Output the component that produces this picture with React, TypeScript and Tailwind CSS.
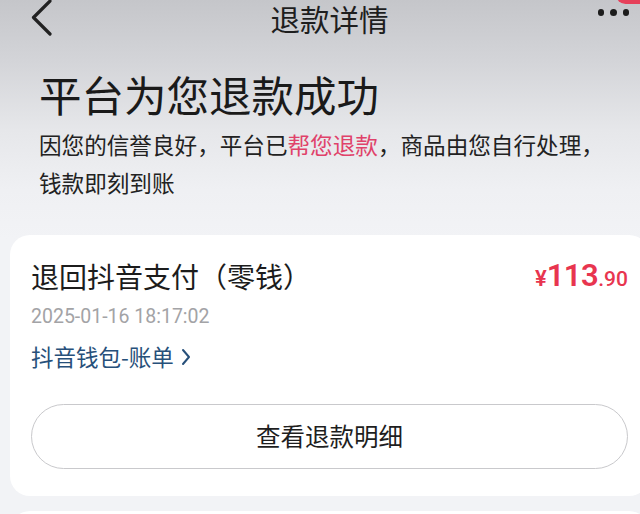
function NavBar() {
  return (
    <div className="relative grid h-[34px] grid-cols-[1fr_auto_1fr] items-center" data-name="Nav Bar">
      <div className="flex items-center pl-[30px]">
        <svg width="24" height="36" viewBox="0 0 24 36" fill="none" className="block">
          <path d="M20 1L3.5 17.5L20 34" stroke="#222222" strokeWidth="3.2" strokeLinecap="round" strokeLinejoin="round" />
        </svg>
      </div>
      <p className="font-['Noto_Sans_CJK_SC',sans-serif] text-[29.5px] leading-[34px] text-[#1e1e1e]">退款详情</p>
      <div className="flex h-full items-start justify-end pr-[30px] pt-[9px]">
        <div className="flex gap-[6px]">
          <span className="size-[6.5px] rounded-full bg-[#1c1c1c]" />
          <span className="size-[6.5px] rounded-full bg-[#1c1c1c]" />
          <span className="size-[6.5px] rounded-full bg-[#1c1c1c]" />
        </div>
      </div>
      <span className="absolute left-[616px] top-[-15px] h-[19px] w-[34px] rounded-full bg-[#e6405a]" />
    </div>
  );
}

function Summary() {
  return (
    <div className="px-[39px]" data-name="Summary">
      <h1 className="mt-[35px] font-['Noto_Sans_CJK_SC',sans-serif] text-[42.5px] leading-[49px] text-[#1a1a1a]">平台为您退款成功</h1>
      <p className="mt-[8px] font-['Noto_Sans_CJK_SC',sans-serif] text-[22.6px] leading-[38px] text-[#222222]">
        因您的信誉良好，平台已<span className="text-[#e0426a]">帮您退款</span>，商品由您自行处理，
        <br />
        钱款即刻到账
      </p>
    </div>
  );
}

function RefundCard() {
  return (
    <div className="ml-[10px] w-[639px] rounded-[20px] bg-white px-[21px] pb-[27px] pt-[22px]" data-name="Refund Card">
      <div className="flex h-[38px] items-center justify-between">
        <p className="font-['Noto_Sans_CJK_SC',sans-serif] text-[28px] leading-[38px] text-[#1c1c1c]">退回抖音支付（零钱）</p>
        <p className="flex items-baseline font-['Roboto',sans-serif] text-[#e8354f]">
          <span className="text-[22px] font-semibold">¥</span>
          <span className="text-[31px] font-semibold tracking-[-0.5px]">113</span>
          <span className="text-[21px] font-medium">.90</span>
        </p>
      </div>
      <p className="mt-[8px] font-['Roboto',sans-serif] text-[19.5px] leading-[28px] text-[#a3a3a6]">2025-01-16 18:17:02</p>
      <div className="mt-[10px] flex h-[30px] items-center gap-[7px]">
        <p className="font-['Noto_Sans_CJK_SC',sans-serif] text-[22.5px] leading-[30px] text-[#27507a]">抖音钱包-账单</p>
        <svg width="10" height="18" viewBox="0 0 10 18" fill="none" className="mt-[2px]">
          <path d="M2 2L8 9L2 16" stroke="#27507a" strokeWidth="2" strokeLinecap="round" strokeLinejoin="round" />
        </svg>
      </div>
      <div className="mt-[33px] flex h-[65px] items-center justify-center rounded-full border border-[#c9c9cc]">
        <p className="font-['Noto_Sans_CJK_SC',sans-serif] text-[24.5px] text-[#1e1e1e]">查看退款明细</p>
      </div>
    </div>
  );
}

export default function App() {
  return (
    <div className="h-[514px] w-[640px] overflow-hidden">
      <div className="h-[514px] w-[659px] bg-[linear-gradient(180deg,#c5c6ca_0px,#d3d4d8_60px,#e6e7ea_130px,#eff0f3_190px,#f2f3f6_240px)]">
        <NavBar />
        <Summary />
        <div className="mt-[33px]">
          <RefundCard />
        </div>
        <div className="ml-[10px] mt-[15px] h-[40px] w-[639px] rounded-t-[20px] bg-white" />
      </div>
    </div>
  );
}
